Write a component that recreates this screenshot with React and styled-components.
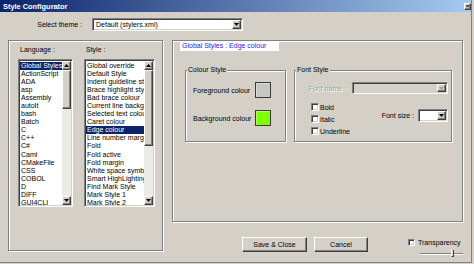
import React from "react";
import styled, { createGlobalStyle } from "styled-components";

const GlobalStyle = createGlobalStyle`
  * { box-sizing: border-box; }
  html, body { margin: 0; padding: 0; background: #d4d0c8; }
  body {
    font-family: "Liberation Sans", Arial, sans-serif;
    font-size: 7px;
    color: #000;
  }
`;

const languages = [
  "Global Styles", "ActionScript", "ADA", "asp", "Assembly", "autoIt",
  "bash", "Batch", "C", "C++", "C#", "Caml", "CMakeFile", "CSS",
  "COBOL", "D", "DIFF", "GUI4CLI",
];

const styleNames = [
  "Global override", "Default Style", "Indent guideline style",
  "Brace highlight style", "Bad brace colour", "Current line background colour",
  "Selected text colour", "Caret colour", "Edge colour", "Line number margin",
  "Fold", "Fold active", "Fold margin", "White space symbol",
  "Smart HighLighting", "Find Mark Style", "Mark Style 1", "Mark Style 2",
];

const sunken = `
  border: 1px solid;
  border-color: #808080 #ffffff #ffffff #808080;
  box-shadow: inset 1px 1px 0 #404040, inset -1px -1px 0 #d4d0c8;
`;

const raised = `
  border: 1px solid;
  border-color: #ffffff #404040 #404040 #ffffff;
  box-shadow: inset -1px -1px 0 #808080;
  background: #d4d0c8;
`;

const etched = `
  border: 1px solid #808080;
  box-shadow: inset 1px 1px 0 #ffffff, 1px 1px 0 #ffffff;
`;

const Window = styled.div`
  width: 472px;
  height: 263px;
  display: flex;
  flex-direction: column;
  background: #d4d0c8;
  border-right: 1px solid #808080;
  border-bottom: 1px solid #808080;
`;

const TitleBar = styled.div`
  height: 12px;
  display: flex;
  align-items: center;
  justify-content: space-between;
  padding-left: 3px;
  background: linear-gradient(to right, #0a246a, #a6caf0);
  color: #fff;
  font-weight: bold;
  font-size: 7.4px;
`;

const CloseBox = styled.div`
  ${raised}
  width: 7px;
  height: 7px;
  display: flex;
  align-items: center;
  justify-content: center;
  color: #000;
  font-size: 6px;
  line-height: 5px;
  font-weight: bold;
`;

const Body = styled.div`
  flex: 1;
  display: flex;
  flex-direction: column;
  padding: 6px 0 0 8px;
`;

const ThemeRow = styled.div`
  display: flex;
  align-items: center;
  height: 13px;
`;

const ThemeLabel = styled.span`
  width: 74px;
  margin-right: 10px;
  text-align: right;
`;

const Combo = styled.div`
  ${sunken}
  width: ${(p) => p.$w}px;
  height: ${(p) => p.$h}px;
  display: flex;
  background: ${(p) => (p.$disabled ? "#d4d0c8" : "#ffffff")};
  padding: 1px;
`;

const ComboText = styled.span`
  flex: 1;
  display: flex;
  align-items: center;
  padding-left: 2px;
  white-space: nowrap;
  overflow: hidden;
`;

const ArrowButton = styled.div`
  ${raised}
  width: ${(p) => p.$w || 9}px;
  height: ${(p) => p.$h ? `${p.$h}px` : "auto"};
  display: flex;
  align-items: center;
  justify-content: center;
  flex-shrink: 0;
`;

const Arrow = ({ up, color = "#000" }) => (
  <svg width="5" height="3" viewBox="0 0 5 3">
    <polygon points={up ? "0,3 5,3 2.5,0" : "0,0 5,0 2.5,3"} fill={color} />
  </svg>
);

const MainRow = styled.div`
  display: flex;
  gap: 9px;
  margin-top: 9px;
`;

const LeftGroup = styled.div`
  ${etched}
  width: 155px;
  height: 211px;
  padding: 5px 0 0 9px;
  display: flex;
  gap: 11px;
`;

const ListColumn = styled.div`
  display: flex;
  flex-direction: column;
  gap: 5px;
  width: ${(p) => p.$w}px;
`;

const ColumnLabel = styled.span`
  line-height: 8px;
  padding-left: 2px;
`;

const ListBox = styled.div`
  ${sunken}
  height: 148px;
  background: #fff;
  display: flex;
  padding: 1px;
  overflow: hidden;
`;

const Items = styled.div`
  flex: 1;
  min-width: 0;
  overflow: hidden;
  padding-top: 0.5px;
`;

const Row = styled.div`
  height: 8.1px;
  line-height: 8.1px;
  padding-left: 1px;
  white-space: nowrap;
  overflow: hidden;
  background: ${(p) => (p.$selected ? "#0a246a" : "transparent")};
  color: ${(p) => (p.$selected ? "#fff" : "#000")};
`;

const ScrollBar = styled.div`
  width: 9px;
  display: flex;
  flex-direction: column;
  background: #eceae6;
`;

const Thumb = styled.div`
  ${raised}
  height: ${(p) => p.$h}px;
`;

const Spacer = styled.div`
  flex: 1;
`;

const RightColumn = styled.div`
  width: 291px;
  display: flex;
  flex-direction: column;
`;

const RightPanel = styled.div`
  ${etched}
  height: 182px;
  padding-left: 7px;
  display: flex;
  flex-direction: column;
`;

const PathLabel = styled.div`
  width: 99px;
  height: 10px;
  line-height: 10px;
  padding-left: 2px;
  background: #fff;
  color: #2424dc;
  white-space: nowrap;
`;

const GroupRow = styled.div`
  display: flex;
  gap: 8px;
  margin: 19px 0 0 5px;
`;

const CaptionGroup = styled.div`
  ${etched}
  position: relative;
  width: ${(p) => p.$w}px;
  height: 72px;
`;

const Caption = styled.span`
  position: absolute;
  top: -5px;
  left: 1px;
  padding: 0 1px;
  line-height: 8px;
  background: #d4d0c8;
`;

const ColourGrid = styled.div`
  display: grid;
  grid-template-columns: 1fr 16px;
  row-gap: 12px;
  align-items: center;
  padding: 11px 14px 0 7px;
`;

const Swatch = styled.div`
  width: 16px;
  height: 16px;
  background: ${(p) => p.$color};
  border: 1px solid #3a3a3a;
  box-shadow: inset 1px 1px 0 rgba(255, 255, 255, 0.35);
`;

const FontBody = styled.div`
  display: flex;
  flex-direction: column;
  padding: 11px 3px 0 0;
`;

const FontNameRow = styled.div`
  display: flex;
  justify-content: flex-end;
  align-items: center;
  gap: 6px;
`;

const DisabledLabel = styled.span`
  color: #a0a0a0;
  text-shadow: 1px 1px 0 #fff;
`;

const OptionsRow = styled.div`
  display: flex;
  justify-content: space-between;
  align-items: flex-start;
  margin-top: 9px;
`;

const CheckList = styled.div`
  display: flex;
  flex-direction: column;
  gap: 4px;
  padding-left: 16px;
`;

const CheckItem = styled.label`
  display: flex;
  align-items: center;
  gap: ${(p) => p.$gap || 1}px;
  height: 8px;
  white-space: nowrap;
`;

const CheckBox = styled.span`
  ${sunken}
  width: ${(p) => p.$size || 8}px;
  height: ${(p) => p.$size || 8}px;
  background: #fff;
  flex-shrink: 0;
`;

const FontSize = styled.div`
  display: flex;
  align-items: center;
  gap: 4px;
  margin-top: 6px;
`;

const BottomRow = styled.div`
  display: flex;
  align-items: flex-start;
  padding-left: 70px;
  margin-top: 15px;
`;

const Button = styled.button`
  ${raised}
  width: ${(p) => p.$w}px;
  height: 15px;
  margin-right: 7px;
  padding: 0;
  font-family: inherit;
  font-size: 7px;
  color: #000;
`;

const Transparency = styled.div`
  display: flex;
  flex-direction: column;
  margin-left: 33px;
  padding-top: 1px;
`;

const Slider = styled.div`
  position: relative;
  width: 43px;
  height: 8px;
  margin: 4px 0 0 12px;
`;

const SliderTrack = styled.div`
  margin-top: 3px;
  height: 2px;
  border-top: 1px solid #808080;
  border-bottom: 1px solid #fff;
`;

const SliderThumb = styled.div`
  position: absolute;
  left: 31px;
  top: 0;
  width: 3px;
  height: 7px;
  background: #d4d0c8;
  border-left: 1px solid #fff;
  border-right: 1px solid #404040;
  border-bottom: 1px solid #404040;
`;

function List({ items, selected, thumb }) {
  return (
    <ListBox>
      <Items>
        {items.map((it) => (
          <Row key={it} $selected={it === selected}>
            {it}
          </Row>
        ))}
      </Items>
      <ScrollBar>
        <ArrowButton $h={9}>
          <Arrow up />
        </ArrowButton>
        <Thumb $h={thumb} />
        <Spacer />
        <ArrowButton $h={9}>
          <Arrow />
        </ArrowButton>
      </ScrollBar>
    </ListBox>
  );
}

export default function App() {
  return (
    <>
      <GlobalStyle />
      <Window>
        <TitleBar>
          <span>Style Configurator</span>
          <CloseBox>×</CloseBox>
        </TitleBar>
        <Body>
          <ThemeRow>
            <ThemeLabel>Select theme :</ThemeLabel>
            <Combo $w={151} $h={13}>
              <ComboText>Default (stylers.xml)</ComboText>
              <ArrowButton>
                <Arrow />
              </ArrowButton>
            </Combo>
          </ThemeRow>
          <MainRow>
            <LeftGroup>
              <ListColumn $w={55}>
                <ColumnLabel>Language :</ColumnLabel>
                <List items={languages} selected="Global Styles" thumb={39} />
              </ListColumn>
              <ListColumn $w={71}>
                <ColumnLabel>Style :</ColumnLabel>
                <List items={styleNames} selected="Edge colour" thumb={76} />
              </ListColumn>
            </LeftGroup>
            <RightColumn>
              <RightPanel>
                <PathLabel>Global Styles : Edge colour</PathLabel>
                <GroupRow>
                  <CaptionGroup $w={101}>
                    <Caption>Colour Style</Caption>
                    <ColourGrid>
                      <span>Foreground colour</span>
                      <Swatch $color="#c6c6c6" />
                      <span>Background colour</span>
                      <Swatch $color="#80ff00" />
                    </ColourGrid>
                  </CaptionGroup>
                  <CaptionGroup $w={158}>
                    <Caption>Font Style</Caption>
                    <FontBody>
                      <FontNameRow>
                        <DisabledLabel>Font name :</DisabledLabel>
                        <Combo $w={96} $h={12} $disabled>
                          <ComboText />
                          <ArrowButton>
                            <Arrow color="#a0a0a0" />
                          </ArrowButton>
                        </Combo>
                      </FontNameRow>
                      <OptionsRow>
                        <CheckList>
                          <CheckItem>
                            <CheckBox />
                            Bold
                          </CheckItem>
                          <CheckItem>
                            <CheckBox />
                            Italic
                          </CheckItem>
                          <CheckItem>
                            <CheckBox />
                            Underline
                          </CheckItem>
                        </CheckList>
                        <FontSize>
                          <span>Font size :</span>
                          <Combo $w={30} $h={13}>
                            <ComboText />
                            <ArrowButton>
                              <Arrow />
                            </ArrowButton>
                          </Combo>
                        </FontSize>
                      </OptionsRow>
                    </FontBody>
                  </CaptionGroup>
                </GroupRow>
              </RightPanel>
              <BottomRow>
                <Button $w={65}>Save &amp; Close</Button>
                <Button $w={54}>Cancel</Button>
                <Transparency>
                  <CheckItem $gap={3}>
                    <CheckBox $size={7} />
                    Transparency
                  </CheckItem>
                  <Slider>
                    <SliderTrack />
                    <SliderThumb />
                  </Slider>
                </Transparency>
              </BottomRow>
            </RightColumn>
          </MainRow>
        </Body>
      </Window>
    </>
  );
}
